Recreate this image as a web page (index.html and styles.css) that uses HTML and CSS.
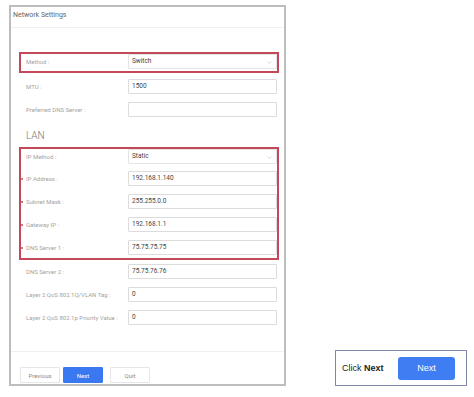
FILE: index.html
```html
<!DOCTYPE html>
<html lang="en">
<head>
    <meta charset="UTF-8">
    <meta name="viewport" content="width=device-width, initial-scale=1.0">
    <title>Network Settings</title>
    <link rel="stylesheet" href="styles.css">
</head>
<body>
    <div class="panel">
        <div class="panel-header">Network Settings</div>

        <div class="panel-body">
            <div class="group boxed">
                <div class="row">
                    <label>Method :</label>
                    <div class="field select">Switch
                        <svg class="caret" width="5" height="3" viewBox="0 0 5 3"><path d="M0.5 0.5 L2.5 2.5 L4.5 0.5" fill="none" stroke="#c4c4c4" stroke-width="0.7"/></svg>
                    </div>
                </div>
            </div>

            <div class="group plain">
                <div class="row">
                    <label>MTU :</label>
                    <div class="field">1500</div>
                </div>
                <div class="row">
                    <label>Preferred DNS Server :</label>
                    <div class="field"></div>
                </div>
            </div>

            <h3 class="section-title">LAN</h3>

            <div class="group boxed">
                <div class="row">
                    <label>IP Method :</label>
                    <div class="field select">Static
                        <svg class="caret" width="5" height="3" viewBox="0 0 5 3"><path d="M0.5 0.5 L2.5 2.5 L4.5 0.5" fill="none" stroke="#c4c4c4" stroke-width="0.7"/></svg>
                    </div>
                </div>
                <div class="row">
                    <label class="required">IP Address :</label>
                    <div class="field">192.168.1.140</div>
                </div>
                <div class="row">
                    <label class="required">Subnet Mask :</label>
                    <div class="field">255.255.0.0</div>
                </div>
                <div class="row">
                    <label class="required">Gateway IP :</label>
                    <div class="field">192.168.1.1</div>
                </div>
                <div class="row">
                    <label class="required">DNS Server 1 :</label>
                    <div class="field">75.75.75.75</div>
                </div>
            </div>

            <div class="group plain after-box">
                <div class="row">
                    <label>DNS Server 2 :</label>
                    <div class="field">75.75.76.76</div>
                </div>
                <div class="row">
                    <label>Layer 2 QoS 802.1Q/VLAN Tag :</label>
                    <div class="field">0</div>
                </div>
                <div class="row">
                    <label>Layer 2 QoS 802.1p Priority Value :</label>
                    <div class="field">0</div>
                </div>
            </div>
        </div>

        <div class="panel-footer">
            <button class="btn">Previous</button>
            <button class="btn btn-primary">Next</button>
            <button class="btn btn-quit">Quit</button>
        </div>
    </div>

    <div class="hint">
        <span class="hint-text">Click <b>Next</b></span>
        <button class="hint-btn">Next</button>
    </div>
</body>
</html>
```

FILE: styles.css
```css
body {
    margin: 0;
    padding: 5px 0 11px 9px;
    height: 397px;
    box-sizing: border-box;
    display: flex;
    align-items: flex-end;
    background-color: #fff;
    font-family: Roboto, "Liberation Sans", sans-serif;
}

.panel {
    width: 277px;
    height: 381px;
    box-sizing: border-box;
    border: 2px solid #bdbdbd;
    display: flex;
    flex-direction: column;
    align-self: flex-start;
}

.panel-header {
    height: 20px;
    line-height: 16px;
    padding-left: 2px;
    font-size: 7px;
    color: #666;
    border-bottom: 1px solid #f0f0f0;
}

.panel-body {
    padding: 24px 5px 0 8px;
    flex: 1;
    border-bottom: 1px solid #f0f0f0;
}

.group {
    display: flex;
    flex-direction: column;
    gap: 8px;
}

.group.boxed {
    border: 2px solid #c2485a;
    padding-bottom: 3px;
}

.group.boxed .row:first-child {
    margin-bottom: -1px;
}

.group.plain {
    padding: 0 2px;
    margin-top: 6px;
}

.group.after-box {
    margin-top: 4px;
}

.row {
    display: flex;
    align-items: center;
    height: 15px;
}

.row label {
    width: 102px;
    padding-left: 5px;
    font-size: 6px;
    color: #a3a3a3;
    position: relative;
}

.row label.required::before {
    content: "";
    position: absolute;
    left: 0;
    top: 3px;
    width: 2px;
    height: 2px;
    border-radius: 50%;
    background-color: #c2485a;
}

.field {
    flex: 1;
    height: 15px;
    box-sizing: border-box;
    border: 1px solid #dcdcdc;
    border-radius: 1px;
    padding-left: 3px;
    font-size: 6.5px;
    line-height: 13px;
    color: #444;
    position: relative;
}

.field.select {
    border-color: #e4e4e4;
}

.caret {
    position: absolute;
    right: 4px;
    top: 6px;
}

.section-title {
    margin: 12px 0 4px 7px;
    height: 14px;
    line-height: 14px;
    font-size: 10px;
    font-weight: 300;
    color: #777;
}

.panel-footer {
    height: 32px;
    padding: 15px 0 0 9px;
    box-sizing: border-box;
    display: flex;
    gap: 3px;
}

.btn {
    width: 40px;
    height: 16px;
    border: 1px solid #e6e6e6;
    border-radius: 1px;
    background-color: #fff;
    font-family: Roboto, "Liberation Sans", sans-serif;
    font-size: 6px;
    color: #888;
    padding: 0;
}

.btn-primary {
    background-color: #3a78f2;
    border-color: #3a78f2;
    color: #fff;
}

.btn-quit {
    margin-left: 4px;
}

.hint {
    margin-left: 49px;
    width: 132px;
    height: 36px;
    box-sizing: border-box;
    border: 1px solid #7f86a8;
    display: flex;
    align-items: center;
    padding: 0 0 0 6px;
}

.hint-text {
    font-family: "Liberation Sans", Arial, sans-serif;
    font-size: 9px;
    color: #222;
    width: 56px;
}

.hint-btn {
    width: 57px;
    height: 23px;
    border: none;
    border-radius: 3px;
    background-color: #3f7ef2;
    color: #fff;
    font-family: "Liberation Sans", Arial, sans-serif;
    font-size: 9px;
    padding: 0;
}
```
